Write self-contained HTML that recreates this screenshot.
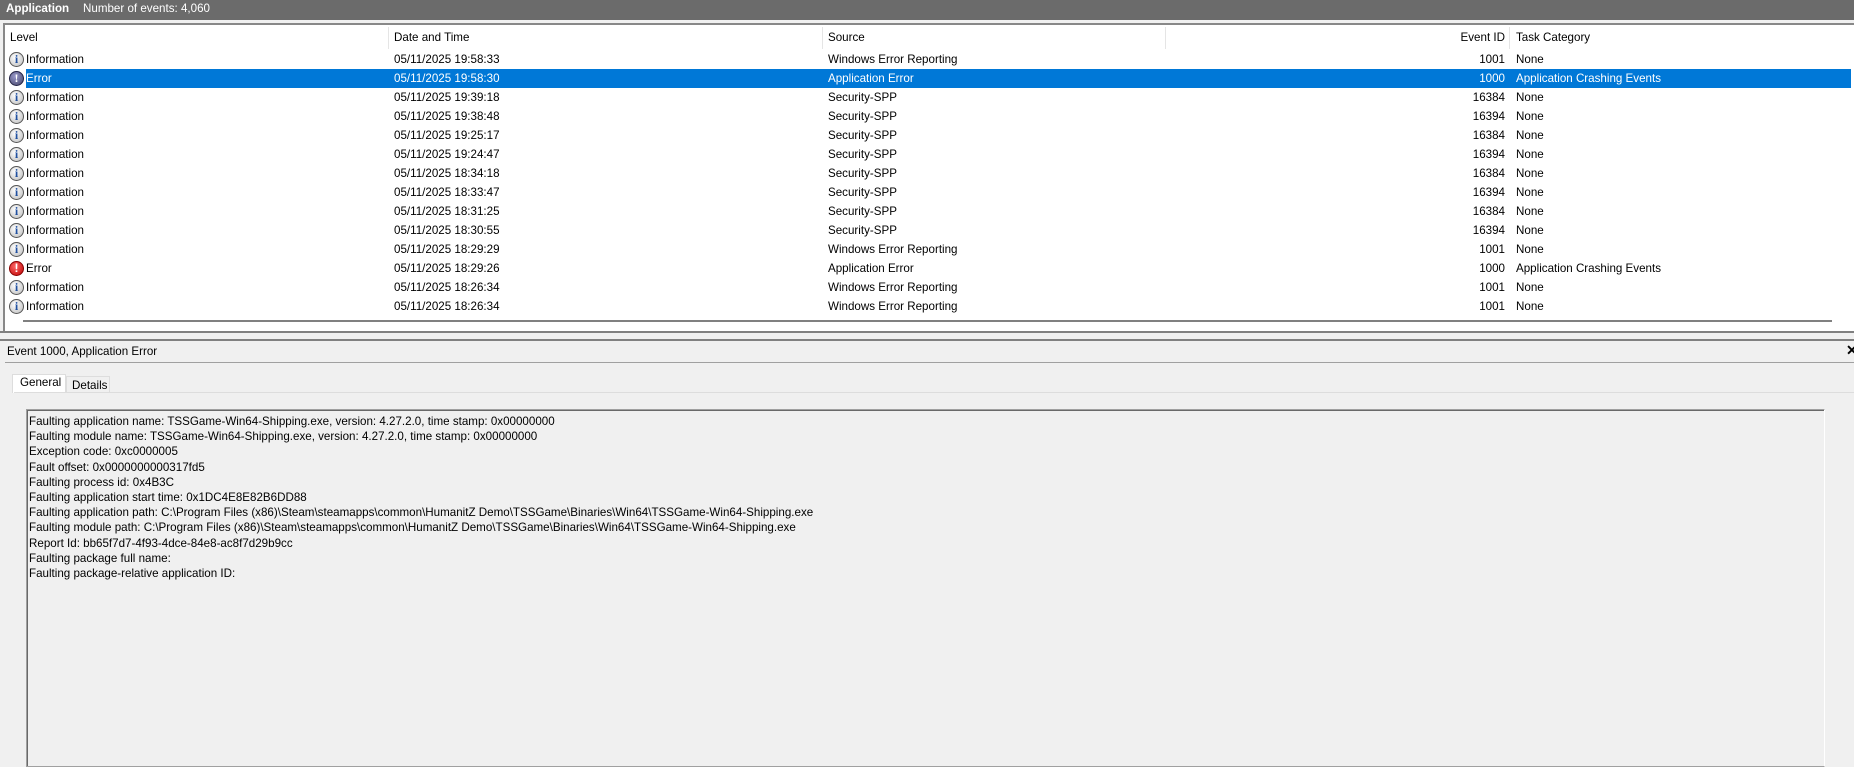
<!DOCTYPE html>
<html><head><meta charset="utf-8"><style>
*{margin:0;padding:0;box-sizing:border-box}
body{width:1854px;height:767px;overflow:hidden;background:#f0f0f0;font-family:"Liberation Sans",sans-serif;font-size:11.6px;color:#000;position:relative}
.abs{position:absolute}
.title{left:0;top:0;width:1854px;height:20px;background:#6b6b6b;color:#fff;font-size:11.6px;line-height:18px}
.list{left:3px;top:23px;width:1851px;height:309px;background:#fff;border-left:2px solid #888;border-top:2px solid #888}
.row{position:absolute;left:0;height:19px;width:1846px;line-height:19px}
.row span{position:absolute;white-space:nowrap}
.sel{background:#0078d7;color:#fff}
.ic{position:absolute;left:4px;top:2px;width:15px;height:15px;border-radius:50%;border:1px solid #555;background:radial-gradient(circle at 40% 35%,#fff,#bbb);font:bold 12px/13px "Liberation Serif",serif;text-align:center;color:#2050a0}
.err{background:radial-gradient(circle at 40% 35%,#f66,#b00);color:#fff;border-color:#800;font-family:"Liberation Sans";}
.selic{background:radial-gradient(circle at 40% 35%,#99c,#446);color:#fff;border-color:#224}
.txt div{height:15.2px;line-height:15.2px;white-space:nowrap}
</style></head><body>
<div class="abs title"><b style="position:absolute;left:6px">Application</b><span style="position:absolute;left:83px">Number of events: 4,060</span></div>
<div class="abs list">
 <div class="row" style="top:2px;height:22px;line-height:22px">
  <span style="left:5px">Level</span><span style="left:389px">Date and Time</span><span style="left:823px">Source</span>
  <span style="left:1426px;width:74px;text-align:right">Event ID</span><span style="left:1511px">Task Category</span>
  <i style="position:absolute;left:383px;top:0;height:22px;border-left:1px solid #e5e5e5"></i>
  <i style="position:absolute;left:817px;top:0;height:22px;border-left:1px solid #e5e5e5"></i>
  <i style="position:absolute;left:1160px;top:0;height:22px;border-left:1px solid #e5e5e5"></i>
  <i style="position:absolute;left:1504px;top:0;height:22px;border-left:1px solid #e5e5e5"></i>
 </div>
 <div id="rows"></div>
 <div style="position:absolute;left:18px;top:295px;width:1809px;height:2px;background:#808080"></div>
</div>
<div class="abs" style="left:0;top:331px;width:1854px;height:2px;background:#808080"></div>
<div class="abs" style="left:0;top:339px;width:1854px;height:2px;background:#808080"></div>
<div class="abs" style="left:7px;top:343px;line-height:17px">Event 1000, Application Error</div>
<div class="abs" style="left:1846px;top:342px;font-weight:bold;font-size:14px">✕</div>
<div class="abs" style="left:5px;top:362px;width:1849px;height:1px;background:#a0a0a0"></div>
<div class="abs" style="left:12px;top:374px;width:54px;height:19px;background:#fff;border:1px solid #ddd;border-bottom:none;line-height:16px;padding-left:7px">General</div>
<div class="abs" style="left:66px;top:376px;width:44px;height:17px;border:1px solid #ddd;border-bottom:none;line-height:17px;padding-left:5px">Details</div>
<div class="abs" style="left:14px;top:392px;width:1840px;height:375px;border-top:1px solid #ddd;background:#f0f0f0"></div>
<div class="abs txt" style="left:26px;top:409px;width:1799px;height:358px;border:1px solid #a0a0a0;border-right-color:#fff;padding:4px 0 0 2px;box-shadow:inset 1px 1px 0 #696969">
<div>Faulting application name: TSSGame-Win64-Shipping.exe, version: 4.27.2.0, time stamp: 0x00000000</div>
<div>Faulting module name: TSSGame-Win64-Shipping.exe, version: 4.27.2.0, time stamp: 0x00000000</div>
<div>Exception code: 0xc0000005</div>
<div>Fault offset: 0x0000000000317fd5</div>
<div>Faulting process id: 0x4B3C</div>
<div>Faulting application start time: 0x1DC4E8E82B6DD88</div>
<div>Faulting application path: C:\Program Files (x86)\Steam\steamapps\common\HumanitZ Demo\TSSGame\Binaries\Win64\TSSGame-Win64-Shipping.exe</div>
<div>Faulting module path: C:\Program Files (x86)\Steam\steamapps\common\HumanitZ Demo\TSSGame\Binaries\Win64\TSSGame-Win64-Shipping.exe</div>
<div>Report Id: bb65f7d7-4f93-4dce-84e8-ac8f7d29b9cc</div>
<div>Faulting package full name: </div>
<div>Faulting package-relative application ID: </div>
</div>
<script>
var d=[["Information","05/11/2025 19:58:33","Windows Error Reporting","1001","None"],
["Error","05/11/2025 19:58:30","Application Error","1000","Application Crashing Events"],
["Information","05/11/2025 19:39:18","Security-SPP","16384","None"],
["Information","05/11/2025 19:38:48","Security-SPP","16394","None"],
["Information","05/11/2025 19:25:17","Security-SPP","16384","None"],
["Information","05/11/2025 19:24:47","Security-SPP","16394","None"],
["Information","05/11/2025 18:34:18","Security-SPP","16384","None"],
["Information","05/11/2025 18:33:47","Security-SPP","16394","None"],
["Information","05/11/2025 18:31:25","Security-SPP","16384","None"],
["Information","05/11/2025 18:30:55","Security-SPP","16394","None"],
["Information","05/11/2025 18:29:29","Windows Error Reporting","1001","None"],
["Error","05/11/2025 18:29:26","Application Error","1000","Application Crashing Events"],
["Information","05/11/2025 18:26:34","Windows Error Reporting","1001","None"],
["Information","05/11/2025 18:26:34","Windows Error Reporting","1001","None"]];
var h="";d.forEach(function(r,i){var s=i==1;var top=25+i*19;
var ic=r[0]=="Error"?(s?'<b class="ic selic">!</b>':'<b class="ic err">!</b>'):'<b class="ic">i</b>';
h+='<div class="row" style="top:'+top+'px">'+(s?'<div class="sel" style="position:absolute;left:21px;top:0;right:0;height:19px"></div>':'')+ic+
'<span style="left:21px'+(s?';color:#fff':'')+'">'+r[0]+'</span><span style="left:389px'+(s?';color:#fff':'')+'">'+r[1]+'</span><span style="left:823px'+(s?';color:#fff':'')+'">'+r[2]+'</span><span style="left:1426px;width:74px;text-align:right'+(s?';color:#fff':'')+'">'+r[3]+'</span><span style="left:1511px'+(s?';color:#fff':'')+'">'+r[4]+'</span></div>';});
document.getElementById("rows").innerHTML=h;
</script>
</body></html>
